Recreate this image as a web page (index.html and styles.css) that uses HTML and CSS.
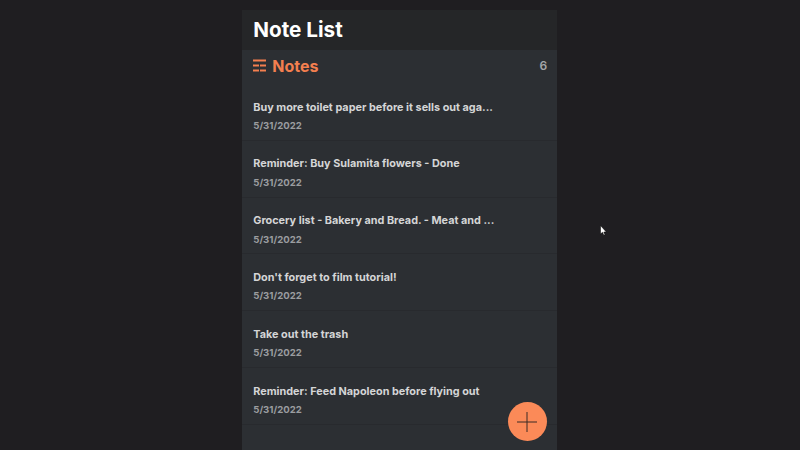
FILE: index.html
```html
<!DOCTYPE html>
<html lang="en">
<head>
<meta charset="utf-8">
<title>Note List</title>
<link rel="stylesheet" href="styles.css">
</head>
<body>
<main class="app">
  <header class="app-header"><h1>Note List</h1></header>
  <section class="notes">
    <div class="notes-head">
      <h2>
        <svg class="notes-icon" viewBox="0 0 13 13" aria-hidden="true">
          <path d="M0 1.5H13M0 6.5H6M7 6.5H13M0 11.5H6M7 11.5H13" />
        </svg>
        Notes
      </h2>
      <span class="count">6</span>
    </div>
    <ul class="note-list">
      <li class="note"><p class="note-title">Buy more toilet paper before it sells out aga...</p><time class="note-date">5/31/2022</time></li>
      <li class="note"><p class="note-title">Reminder: Buy Sulamita flowers - Done</p><time class="note-date">5/31/2022</time></li>
      <li class="note"><p class="note-title">Grocery list - Bakery and Bread. - Meat and ...</p><time class="note-date">5/31/2022</time></li>
      <li class="note"><p class="note-title">Don't forget to film tutorial!</p><time class="note-date">5/31/2022</time></li>
      <li class="note"><p class="note-title">Take out the trash</p><time class="note-date">5/31/2022</time></li>
      <li class="note"><p class="note-title">Reminder: Feed Napoleon before flying out</p><time class="note-date">5/31/2022</time></li>
    </ul>
    <button class="fab" aria-label="Add note">
      <svg viewBox="0 0 20 20" aria-hidden="true"><path d="M10 0V20M0 10H20" /></svg>
    </button>
  </section>
</main>
<svg class="cursor" viewBox="0 0 7 11" aria-hidden="true"><path d="M0.5 0.5V9L2.5 7.3L3.8 10.3L5 9.8L3.8 7H6.3Z" /></svg>
</body>
</html>
```
FILE: styles.css
```css
* { box-sizing: border-box; }
html, body { height: 100%; }
body {
  margin: 0;
  padding-top: 10px;
  background: #1f1e21;
  overflow: hidden;
  font-family: "Inter", "Liberation Sans", sans-serif;
  display: flex;
  justify-content: center;
}
.app {
  width: 315px;
  height: 440px;
  margin-left: -0.5px;
  display: flex;
  flex-direction: column;
  background: #2c2f33;
}
.app-header {
  height: 40px;
  padding: 0 11px 2px;
  display: flex;
  align-items: center;
  background: #252628;
}
.app-header h1 {
  margin: 0;
  font-size: 20.7px;
  font-weight: 700;
  color: #fff;
}
.notes {
  position: relative;
  flex: 1;
}
.notes-head {
  height: 31px;
  padding: 0 11px;
  display: flex;
  align-items: center;
  justify-content: space-between;
}
.notes-head h2 {
  margin: 0;
  display: flex;
  align-items: center;
  gap: 6px;
  font-size: 16px;
  font-weight: 700;
  color: #f47f4f;
}
.notes-icon {
  width: 13px;
  height: 13px;
  fill: none;
  stroke: #f47f4f;
  stroke-width: 2.2;
}
.count {
  font-size: 12px;
  font-weight: 600;
  color: #a4a6a8;
  margin-right: -1px;
}
.note-list {
  margin: 0;
  padding: 3px 0 0;
  list-style: none;
}
.note {
  height: 56.8px;
  padding: 14.6px 11px 0;
  border-bottom: 1px solid #282a2e;
}
.note-title {
  margin: 0 0 4.4px;
  font-size: 10.85px;
  line-height: 16px;
  font-weight: 700;
  color: #d4d5d6;
}
.note-date {
  display: block;
  font-size: 9.6px;
  line-height: 14px;
  font-weight: 700;
  color: #9b9da0;
}
.fab {
  position: absolute;
  right: 10.5px;
  bottom: 9px;
  width: 39px;
  height: 39px;
  padding: 0;
  border: 0;
  border-radius: 50%;
  background: #fb8a58;
  display: flex;
  align-items: center;
  justify-content: center;
}
.fab svg {
  width: 20px;
  height: 20px;
  fill: none;
  stroke: #3a2a24;
  stroke-width: 1;
}
.cursor {
  position: absolute;
  left: 600px;
  top: 225px;
  width: 7px;
  height: 11px;
  fill: #fff;
  stroke: #000;
  stroke-width: 0.5;
}
```
